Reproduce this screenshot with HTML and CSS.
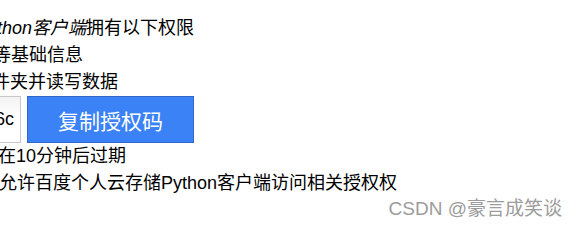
FILE: index.html
```html
<!DOCTYPE html>
<html lang="zh-CN">
<head>
<meta charset="utf-8">
<title>授权</title>
<link rel="stylesheet" href="styles.css">
</head>
<body>
<div class="page">
  <div class="content">
    <div class="line">百度个人云存储<em>Python客户端</em>拥有以下权限</div>
    <div class="line l2">获取用户名、头像等基础信息</div>
    <div class="line l3">在您的网盘创建文件夹并读写数据</div>
    <div class="code-row">
      <div class="code-input"><span>4f9a2e7b1d8c3e6c</span></div>
      <button class="copy-btn">复制授权码</button>
    </div>
    <div class="line l4">注意：此授权码将在10分钟后过期</div>
    <div class="line l5">点击按钮即代表您允许百度个人云存储Python客户端访问相关授权权</div>
  </div>
  <div class="watermark">CSDN @豪言成笑谈</div>
</div>
</body>
</html>
```

FILE: styles.css
```css
html, body {
  margin: 0;
  padding: 0;
  background: #ffffff;
}
body {
  width: 577px;
  height: 229px;
  overflow: hidden;
  font-family: "Liberation Sans", "Noto Sans CJK SC", sans-serif;
  font-size: 18px;
  color: #000000;
}
.page {
  position: relative;
  width: 577px;
  height: 229px;
  overflow: hidden;
}
.content {
  margin-left: -150px;
  padding-top: 15px;
}
.line {
  line-height: 27px;
  height: 27px;
  white-space: nowrap;
}
.line em {
  font-style: italic;
}
.l2 { text-indent: -1px; }
.l3 { text-indent: -2px; }
.l4 { text-indent: 4px; }
.l5 { text-indent: 5px; }
.code-row {
  display: flex;
  gap: 6px;
  height: 47px;
}
.code-input {
  box-sizing: border-box;
  width: 171px;
  height: 47px;
  border: 1px solid #c8c8c8;
  background: linear-gradient(#f2f2f2, #ffffff 40%);
  display: flex;
  align-items: center;
  justify-content: flex-end;
  padding-right: 6px;
  overflow: hidden;
  white-space: nowrap;
  font-size: 18px;
}
.copy-btn {
  box-sizing: border-box;
  width: 167px;
  height: 47px;
  border: 1px solid #2f68c9;
  background: #3b82f6;
  color: #ffffff;
  font-family: "Liberation Sans", "Noto Sans CJK SC", sans-serif;
  font-size: 21px;
  padding: 0;
  margin: 0;
}
.watermark {
  position: absolute;
  top: 199px;
  right: 15px;
  font-size: 19px;
  line-height: 19px;
  color: #9c9c9c;
  white-space: nowrap;
}
```
